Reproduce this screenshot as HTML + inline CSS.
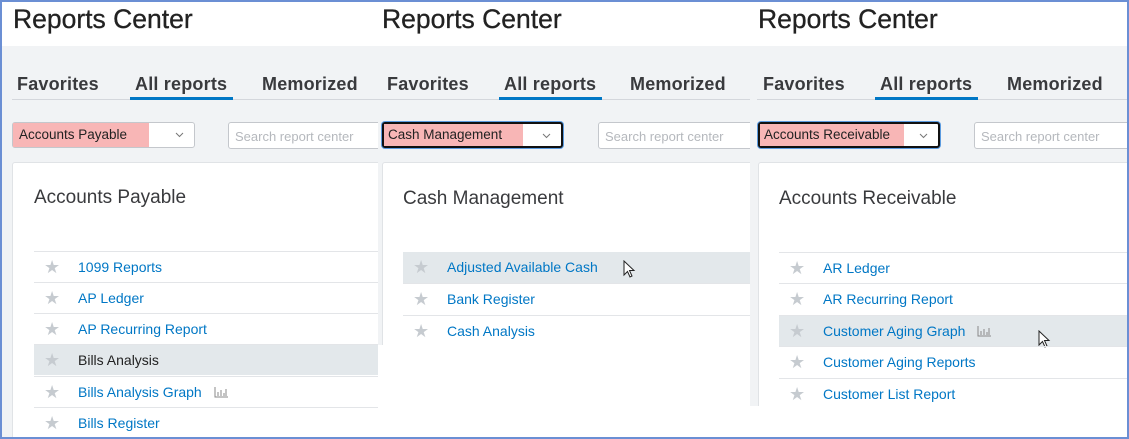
<!DOCTYPE html>
<html><head><style>
*{margin:0;padding:0;box-sizing:border-box}
body{width:1129px;height:439px;position:relative;background:#fff;font-family:"Liberation Sans",sans-serif;overflow:hidden}
.frame{position:absolute;left:0;top:0;width:1129px;height:439px;border:2px solid #6b8fd4;z-index:10;pointer-events:none}
.p{position:absolute;top:0;overflow:hidden;background:#f1f3f5}
.hd{position:absolute;left:0;top:0;right:0;height:46px;background:#fff}
.t{position:absolute;top:4px;font-size:26.5px;color:#222;-webkit-text-stroke:0.3px #222}
.tab{position:absolute;top:74px;font-size:18px;font-weight:bold;color:#393a3d;letter-spacing:0.2px}
.tl{position:absolute;top:99px;height:1px;background:#d4d7dc}
.ul{position:absolute;top:97px;height:3px;background:#0077c5}
.dd{position:absolute;top:122px;height:26px;border:1px solid #c4c7cc;border-radius:3px;background:#fff;font-size:13.5px;color:#222;padding:4px 0 0 6px;white-space:nowrap}
.dd.b{border:2px solid #111;box-shadow:0 0 0 1px #5b9be0;padding:3px 0 0 4px}
.hl{position:absolute;left:0;top:0;bottom:0;background:#f8b6b6}
.dd span{position:relative}
.ch{position:absolute;right:10px;top:9px}
.sr{position:absolute;top:122px;height:27px;border:1px solid #c4c7cc;border-radius:3px;background:#fff;font-size:13px;color:#b5b8bd;padding:6px 0 0 6px;white-space:nowrap}
.card{position:absolute;top:162px;background:#fff;border:1px solid #e0e3e6;border-radius:3px}
.ct{position:absolute;font-size:19px;color:#393a3d}
.r{position:absolute;height:31px;border-top:1px solid #e3e5e8;font-size:14px;color:#0077c5;padding-top:8px}
.r.h{background:#e3e8eb}
.r .s{position:absolute;left:10px;top:5px;color:#c6cbd0;font-size:18px}
.r .x{position:absolute;left:44px;top:7px;white-space:nowrap}
.bar{display:inline-block;margin-left:12px;vertical-align:-1px}
</style></head><body>
<div class="p" style="left:0;width:378px;height:439px">
 <div class="hd"></div>
 <div class="t" style="left:13px">Reports Center</div>
 <div class="tl" style="left:12px;width:366px"></div>
 <div class="tab" style="left:17px">Favorites</div>
 <div class="tab" style="left:135px">All reports</div>
 <div class="ul" style="left:130px;width:103px"></div>
 <div class="tab" style="left:262px">Memorized</div>
 <div class="dd" style="left:12px;width:183px"><div class="hl" style="width:136px"></div><span>Accounts Payable</span><svg class="ch" width="9" height="6"><path d="M1 1L4.5 4.5L8 1" stroke="#777" fill="none"/></svg></div>
 <div class="sr" style="left:228px;width:160px">Search report center</div>
 <div class="card" style="left:12px;width:380px;height:300px"></div>
 <div class="ct" style="left:34px;top:187px">Accounts Payable</div>
 <div class="r" style="left:34px;width:344px;top:251px"><span class="s">★</span><span class="x">1099 Reports</span></div>
 <div class="r" style="left:34px;width:344px;top:282px"><span class="s">★</span><span class="x">AP Ledger</span></div>
 <div class="r" style="left:34px;width:344px;top:313px"><span class="s">★</span><span class="x">AP Recurring Report</span></div>
 <div class="r h" style="left:34px;width:344px;top:344px;color:#222"><span class="s">★</span><span class="x">Bills Analysis</span></div>
 <div class="r" style="left:34px;width:344px;top:376px"><span class="s">★</span><span class="x">Bills Analysis Graph<svg class="bar" width="14" height="11"><path d="M1 0V10H14M4 5V9M7 3V9M10 6V9M12 2V9" stroke="#888" fill="none"/></svg></span></div>
 <div class="r" style="left:34px;width:344px;top:407px;height:30px"><span class="s">★</span><span class="x">Bills Register</span></div>
</div>
<div class="p" style="left:378px;width:372px;height:345px">
 <div class="hd"></div>
 <div class="t" style="left:4px">Reports Center</div>
 <div class="tl" style="left:0;width:372px"></div>
 <div class="tab" style="left:9px">Favorites</div>
 <div class="tab" style="left:126px">All reports</div>
 <div class="ul" style="left:121px;width:103px"></div>
 <div class="tab" style="left:252px">Memorized</div>
 <div class="dd b" style="left:4px;width:181px"><div class="hl" style="width:139px"></div><span>Cash Management</span><svg class="ch" width="9" height="6"><path d="M1 1L4.5 4.5L8 1" stroke="#777" fill="none"/></svg></div>
 <div class="sr" style="left:220px;width:160px">Search report center</div>
 <div class="card" style="left:4px;width:380px;height:200px"></div>
 <div class="ct" style="left:25px;top:188px">Cash Management</div>
 <div class="r h" style="left:25px;width:347px;top:252px;border-top:none"><span class="s">★</span><span class="x">Adjusted Available Cash</span>
  <svg style="position:absolute;left:220px;top:8px" width="14" height="20"><path d="M1 1V15L4.5 11.5L7 17L9 16L6.5 10.5H11Z" fill="#fff" stroke="#222" stroke-width="1"/></svg></div>
 <div class="r" style="left:25px;width:347px;top:283px"><span class="s">★</span><span class="x">Bank Register</span></div>
 <div class="r" style="left:25px;width:347px;top:315px"><span class="s">★</span><span class="x">Cash Analysis</span></div>
</div>
<div class="p" style="left:750px;width:379px;height:406px">
 <div class="hd"></div>
 <div class="t" style="left:8px">Reports Center</div>
 <div class="tl" style="left:7px;width:372px"></div>
 <div class="tab" style="left:13px">Favorites</div>
 <div class="tab" style="left:130px">All reports</div>
 <div class="ul" style="left:125px;width:103px"></div>
 <div class="tab" style="left:257px">Memorized</div>
 <div class="dd b" style="left:8px;width:182px"><div class="hl" style="width:144px"></div><span>Accounts Receivable</span><svg class="ch" width="9" height="6"><path d="M1 1L4.5 4.5L8 1" stroke="#777" fill="none"/></svg></div>
 <div class="sr" style="left:224px;width:160px">Search report center</div>
 <div class="card" style="left:8px;width:380px;height:260px"></div>
 <div class="ct" style="left:29px;top:188px">Accounts Receivable</div>
 <div class="r" style="left:29px;width:350px;top:252px"><span class="s">★</span><span class="x">AR Ledger</span></div>
 <div class="r" style="left:29px;width:350px;top:283px"><span class="s">★</span><span class="x">AR Recurring Report</span></div>
 <div class="r h" style="left:29px;width:350px;top:315px"><span class="s">★</span><span class="x">Customer Aging Graph<svg class="bar" width="14" height="11"><path d="M1 0V10H14M4 5V9M7 3V9M10 6V9M12 2V9" stroke="#888" fill="none"/></svg></span>
  <svg style="position:absolute;left:259px;top:14px" width="14" height="20"><path d="M1 1V15L4.5 11.5L7 17L9 16L6.5 10.5H11Z" fill="#fff" stroke="#222" stroke-width="1"/></svg></div>
 <div class="r" style="left:29px;width:350px;top:346px"><span class="s">★</span><span class="x">Customer Aging Reports</span></div>
 <div class="r" style="left:29px;width:350px;top:378px"><span class="s">★</span><span class="x">Customer List Report</span></div>
</div>
<div class="frame"></div>
</body></html>
